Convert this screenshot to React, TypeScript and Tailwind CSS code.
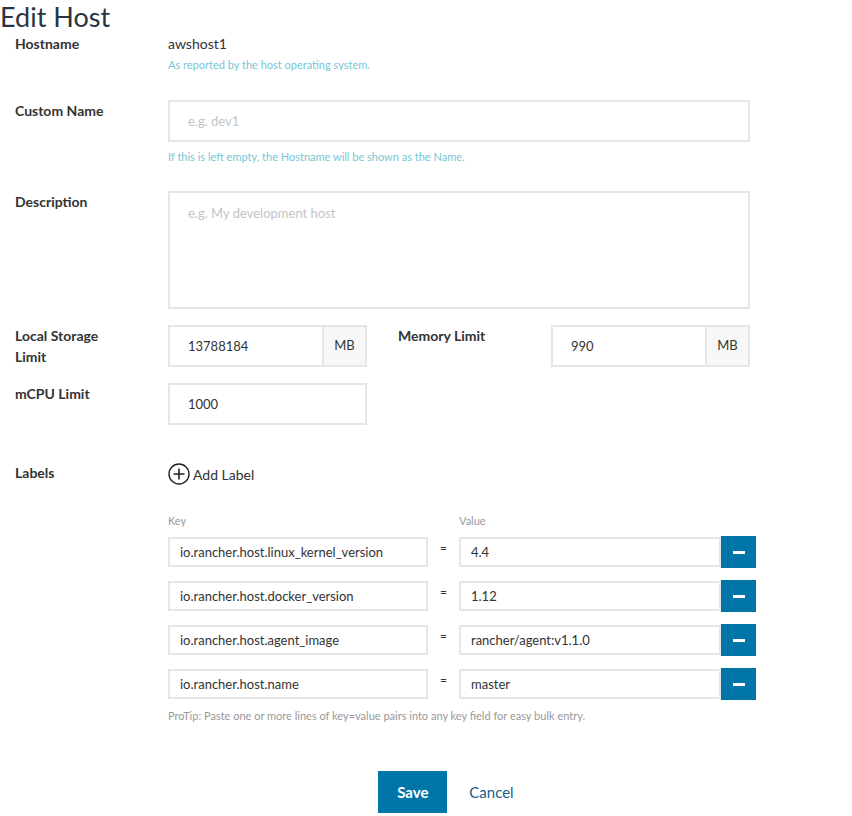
import React from "react";

const rows = [
  ["io.rancher.host.linux_kernel_version", "4.4"],
  ["io.rancher.host.docker_version", "1.12"],
  ["io.rancher.host.agent_image", "rancher/agent:v1.1.0"],
  ["io.rancher.host.name", "master"],
];

const input = "border-2 border-[#e6e6e6] bg-white text-[13px] text-[#333] outline-none font-[Lato,sans-serif]";

export default function App() {
  return (
    <div className="w-[852px] h-[816px] bg-white text-[#333] font-[Lato,sans-serif]">
      <h1 className="text-[27px] leading-[34px] text-[#2b3440]">Edit Host</h1>

      {/* Hostname */}
      <div className="flex pl-[15px]">
        <div className="w-[153px] text-[14px] font-bold leading-[20px]">Hostname</div>
        <div>
          <div className="text-[14px] leading-[20px]">awshost1</div>
          <div className="text-[11px] text-[#78c6d4] mt-[4px] leading-[14px]">As reported by the host operating system.</div>
        </div>
      </div>

      {/* Custom Name */}
      <div className="flex pl-[15px] mt-[28px]">
        <div className="w-[153px] text-[14px] font-bold leading-[20px] pt-[1px]">Custom Name</div>
        <div>
          <input className={`${input} w-[582px] h-[42px] px-[18px] placeholder:text-[#c4c4c4]`} placeholder="e.g. dev1" />
          <div className="text-[11px] text-[#78c6d4] mt-[8px] leading-[14px]">If this is left empty, the Hostname will be shown as the Name.</div>
        </div>
      </div>

      {/* Description */}
      <div className="flex pl-[15px] mt-[27px]">
        <div className="w-[153px] text-[14px] font-bold leading-[20px] pt-[1px]">Description</div>
        <textarea className={`${input} w-[582px] h-[118px] px-[18px] py-[11px] resize-none placeholder:text-[#c4c4c4]`} placeholder="e.g. My development host" />
      </div>

      {/* Limits */}
      <div className="flex pl-[15px] mt-[16px]">
        <div className="w-[153px] text-[14px] font-bold leading-[21px]">Local Storage<br />Limit</div>
        <div className="flex w-[199px] h-[42px]">
          <input className={`${input} w-[156px] h-full px-[18px]`} defaultValue="13788184" />
          <div className="w-[43px] h-full border-2 border-l-0 border-[#e6e6e6] bg-[#f7f7f7] text-[13px] flex items-center justify-center">MB</div>
        </div>
        <div className="w-[184px] pl-[31px] text-[14px] font-bold leading-[21px]">Memory Limit</div>
        <div className="flex w-[199px] h-[42px]">
          <input className={`${input} w-[156px] h-full px-[18px]`} defaultValue="990" />
          <div className="w-[43px] h-full border-2 border-l-0 border-[#e6e6e6] bg-[#f7f7f7] text-[13px] flex items-center justify-center">MB</div>
        </div>
      </div>

      <div className="flex pl-[15px] mt-[16px]">
        <div className="w-[153px] text-[14px] font-bold leading-[21px]">mCPU Limit</div>
        <input className={`${input} w-[199px] h-[42px] px-[18px]`} defaultValue="1000" />
      </div>

      {/* Labels */}
      <div className="flex pl-[15px] mt-[37px]">
        <div className="w-[153px] text-[14px] font-bold leading-[21px]">Labels</div>
        <div>
          <div className="flex items-center mt-[1px] h-[22px]">
            <svg width="22" height="22" viewBox="0 0 22 22" className="text-[#222]">
              <circle cx="11" cy="11" r="10" fill="none" stroke="currentColor" strokeWidth="1.4" />
              <path d="M11 5.5v11M5.5 11h11" stroke="currentColor" strokeWidth="1.6" />
            </svg>
            <span className="text-[14px] ml-[3px]">Add Label</span>
          </div>
          <div className="flex text-[11px] text-[#999] mt-[29px] leading-[14px]">
            <div className="w-[291px]">Key</div>
            <div>Value</div>
          </div>
          <div className="flex flex-col gap-[14px] mt-[9px]">
            {rows.map(([k, v]) => (
              <div key={k} className="flex items-center h-[30px]">
                <input className={`${input} w-[260px] h-full px-[10px]`} defaultValue={k} />
                <div className="w-[31px] text-center text-[12px] -mt-[8px]">=</div>
                <input className={`${input} w-[262px] h-full px-[10px]`} defaultValue={v} />
                <button className="w-[35px] h-[32px] bg-[#0075a8] flex items-center justify-center">
                  <span className="block w-[12px] h-[3px] bg-white" />
                </button>
              </div>
            ))}
          </div>
          <div className="text-[11px] text-[#999] mt-[10px] leading-[14px]">
            ProTip: Paste one or more lines of key=value pairs into any key field for easy bulk entry.
          </div>
        </div>
      </div>

      <div className="flex justify-center items-center mt-[48px] pl-[40px]">
        <button className="w-[69px] h-[42px] bg-[#0075a8] text-white text-[15px] font-bold font-[Lato,sans-serif]">Save</button>
        <button className="ml-[22px] text-[15px] text-[#1a5d87] font-[Lato,sans-serif]">Cancel</button>
      </div>
    </div>
  );
}
